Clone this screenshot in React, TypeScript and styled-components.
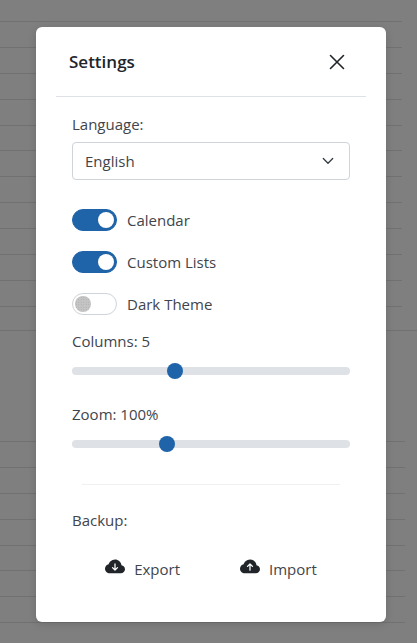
import React, { useState } from "react";
import styled, { createGlobalStyle } from "styled-components";
import { BsCloudArrowDownFill, BsCloudArrowUpFill } from "react-icons/bs";

const GlobalStyle = createGlobalStyle`
  html, body {
    margin: 0;
    padding: 0;
    height: 100%;
  }
  body {
    font-family: "Open Sans", "Noto Sans", sans-serif;
    color: #212529;
  }
`;

const Page = styled.div`
  position: relative;
  width: 417px;
  height: 643px;
  overflow: hidden;
  background: #fff;
`;

const RowsBehind = styled.div`
  display: flex;
  flex-direction: column;
  padding-top: 21px;
`;

const RowGroup = styled.div<{ $width: number; $height: number }>`
  width: ${(p) => p.$width}px;
  height: ${(p) => p.$height}px;
`;

const BehindRow = styled.div`
  height: 25.9px;
  box-sizing: border-box;
  border-top: 1px solid #dee2e6;
`;

const SectionLine = styled.div`
  height: 1px;
  background: #dee2e6;
`;

const Backdrop = styled.div`
  position: absolute;
  inset: 0;
  display: flex;
  justify-content: center;
  align-items: flex-start;
  padding: 27px 0 0 5px;
  background: rgba(0, 0, 0, 0.5);
`;

const Modal = styled.div`
  width: 350px;
  height: 595px;
  box-sizing: border-box;
  background: #fff;
  border-radius: 6px;
  box-shadow: 0 2px 8px rgba(0, 0, 0, 0.15);
`;

const Header = styled.div`
  display: flex;
  align-items: center;
  justify-content: space-between;
  height: 70px;
  box-sizing: border-box;
  margin: 0 20px;
  padding: 0 21px 0 13px;
  border-bottom: 1px solid #dee2e6;
`;

const Title = styled.h5`
  margin: 0;
  font-size: 17px;
  font-weight: 600;
  color: #212529;
`;

const CloseButton = styled.button`
  display: flex;
  padding: 0;
  border: none;
  background: none;
  color: #212529;
`;

const Body = styled.div`
  padding: 17px 36px 0;
`;

const FieldLabel = styled.div`
  font-size: 15px;
  line-height: 20px;
  color: #3f454b;
`;

const SelectBox = styled.div`
  display: flex;
  align-items: center;
  justify-content: space-between;
  height: 38px;
  margin-top: 8px;
  padding: 0 15px 0 12px;
  box-sizing: border-box;
  border: 1px solid #ced4da;
  border-radius: 4px;
  font-size: 15px;
  color: #3f454b;
`;

const SwitchList = styled.div`
  display: flex;
  flex-direction: column;
  gap: 20px;
  margin-top: 29px;
`;

const SwitchRow = styled.label`
  display: flex;
  align-items: center;
  gap: 10px;
  height: 22px;
  font-size: 15px;
  color: #3f454b;
`;

const SwitchTrack = styled.span<{ $on: boolean }>`
  display: flex;
  align-items: center;
  justify-content: ${(p) => (p.$on ? "flex-end" : "flex-start")};
  width: 45px;
  height: 22px;
  padding: 0 2px;
  box-sizing: border-box;
  border-radius: 11px;
  border: 1px solid ${(p) => (p.$on ? "#1f63a8" : "#ced4da")};
  background: ${(p) => (p.$on ? "#1f63a8" : "#fff")};
`;

const SwitchKnob = styled.span<{ $on: boolean }>`
  width: 16px;
  height: 16px;
  border-radius: 50%;
  background-color: ${(p) => (p.$on ? "#fff" : "#c4c4c4")};
  background-image: ${(p) =>
    p.$on ? "none" : "radial-gradient(#a9a9a9 0.6px, transparent 0.7px)"};
  background-size: 2.5px 2.5px;
`;

const SliderBlock = styled.div<{ $top: number }>`
  margin-top: ${(p) => p.$top}px;
`;

const Track = styled.div`
  position: relative;
  height: 8px;
  margin-top: 16px;
  border-radius: 4px;
  background: #dee2e6;
`;

const Thumb = styled.div`
  position: absolute;
  top: 50%;
  width: 16px;
  height: 16px;
  border-radius: 50%;
  background: #1f63a8;
  transform: translate(-50%, -50%);
`;

const Divider = styled.hr`
  margin: 36px 10px 0;
  border: none;
  border-top: 1px solid #eff0f2;
`;

const BackupLabel = styled(FieldLabel)`
  margin-top: 25px;
`;

const BackupActions = styled.div`
  display: flex;
  justify-content: center;
  gap: 60px;
  margin-top: 27px;
`;

const BackupButton = styled.button`
  display: flex;
  align-items: center;
  gap: 9px;
  padding: 0;
  border: none;
  background: none;
  font-family: inherit;
  font-size: 15px;
  line-height: 24px;
  color: #3f454b;

  svg {
    width: 20px;
    height: 20px;
    color: #212529;
    margin-top: -4px;
  }
`;

function Switch({ label, defaultOn }: { label: string; defaultOn: boolean }) {
  const [on, setOn] = useState(defaultOn);
  return (
    <SwitchRow onClick={() => setOn(!on)}>
      <SwitchTrack $on={on}>
        <SwitchKnob $on={on} />
      </SwitchTrack>
      {label}
    </SwitchRow>
  );
}

function Slider({ label, left, top }: { label: string; left: number; top: number }) {
  return (
    <SliderBlock $top={top}>
      <FieldLabel>{label}</FieldLabel>
      <Track>
        <Thumb style={{ left: `${left}%` }} />
      </Track>
    </SliderBlock>
  );
}

export default function App() {
  return (
    <Page>
      <GlobalStyle />
      <RowsBehind>
        <RowGroup $width={402} $height={309}>
          {Array.from({ length: 12 }, (_, i) => (
            <BehindRow key={i} />
          ))}
        </RowGroup>
        <SectionLine />
        <RowGroup $width={405} $height={110} />
        <RowGroup $width={405} $height={182}>
          {Array.from({ length: 8 }, (_, i) => (
            <BehindRow key={i} />
          ))}
        </RowGroup>
      </RowsBehind>
      <Backdrop>
        <Modal>
          <Header>
            <Title>Settings</Title>
            <CloseButton aria-label="Close">
              <svg width="16" height="16" viewBox="0 0 16 16" fill="none" stroke="currentColor" strokeWidth="1.6" strokeLinecap="round">
                <path d="M1.5 1.5l13 13M14.5 1.5l-13 13" />
              </svg>
            </CloseButton>
          </Header>
          <Body>
            <FieldLabel>Language:</FieldLabel>
            <SelectBox>
              English
              <svg width="12" height="8" viewBox="0 0 12 8" fill="none" stroke="#343a40" strokeWidth="1.3" strokeLinecap="round" strokeLinejoin="round">
                <path d="M1.3 1.5L6 6.2l4.7-4.7" />
              </svg>
            </SelectBox>
            <SwitchList>
              <Switch label="Calendar" defaultOn />
              <Switch label="Custom Lists" defaultOn />
              <Switch label="Dark Theme" defaultOn={false} />
            </SwitchList>
            <Slider label="Columns: 5" left={37} top={16} />
            <Slider label="Zoom: 100%" left={34.2} top={29} />
            <Divider />
            <BackupLabel>Backup:</BackupLabel>
            <BackupActions>
              <BackupButton>
                <BsCloudArrowDownFill />
                Export
              </BackupButton>
              <BackupButton>
                <BsCloudArrowUpFill />
                Import
              </BackupButton>
            </BackupActions>
          </Body>
        </Modal>
      </Backdrop>
    </Page>
  );
}
